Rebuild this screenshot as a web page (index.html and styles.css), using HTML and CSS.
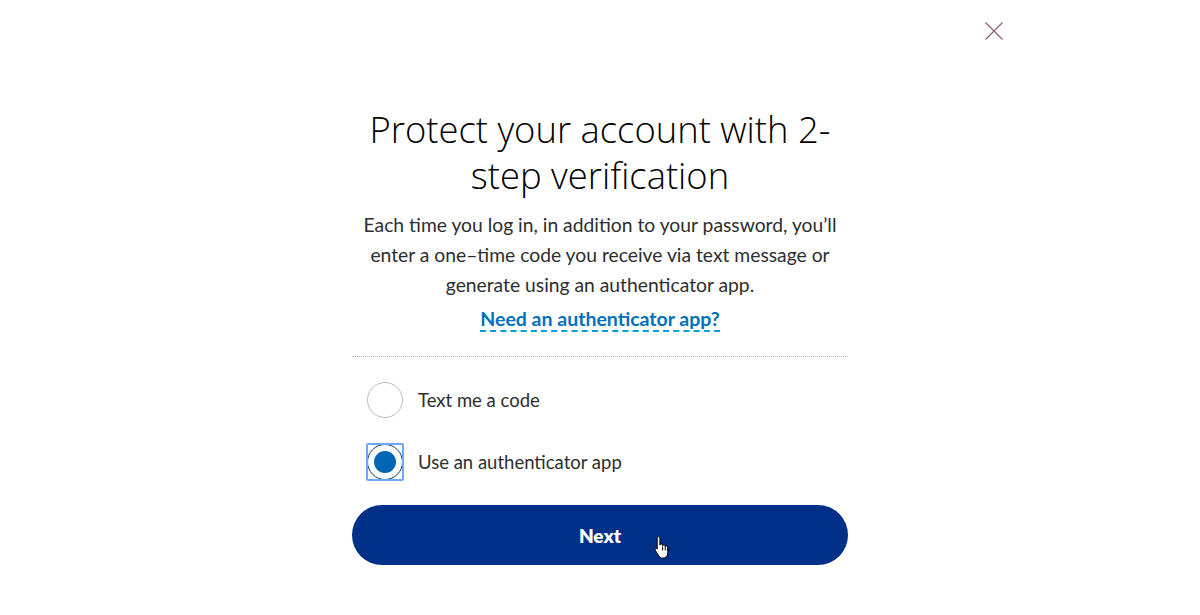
FILE: index.html
```html
<!DOCTYPE html>
<html>
  <head>
    <meta charset="utf-8">
    <title>2-step verification</title>
    <link rel="stylesheet" href="styles.css">
  </head>
  <body>
    <div class="topbar">
      <button class="close" aria-label="Close">
        <svg width="18" height="18" viewBox="0 0 18 18"><path d="M0.5 0.5L17.5 17.5M17.5 0.5L0.5 17.5" stroke="#8e5678" stroke-width="1.1" fill="none"/></svg>
      </button>
    </div>
    <div class="main">
      <h1 class="title">Protect your account with 2-step verification</h1>
      <p class="lead">Each time you log in, in addition to your password, you’ll enter a one–time code you receive via text message or generate using an authenticator app.</p>
      <div class="link-row"><a class="help-link" href="#">Need an authenticator app?</a></div>
      <div class="options">
        <label class="option">
          <span class="radio"></span>
          <span class="option-text">Text me a code</span>
        </label>
        <label class="option">
          <span class="radio checked"><span class="dot"></span></span>
          <span class="option-text">Use an authenticator app</span>
        </label>
      </div>
      <button class="next">Next
        <svg class="cursor" width="16" height="24" viewBox="0 0 16 24"><path d="M4.5 1.5c.8 0 1.4.6 1.4 1.4v7.2c.2-.8.8-1.2 1.4-1.2.8 0 1.3.6 1.3 1.3v.6c.2-.6.7-1 1.3-1 .8 0 1.3.6 1.3 1.3v.7c.2-.5.7-.9 1.3-.9.8 0 1.3.6 1.3 1.4v5.5c0 3.2-2 5.400-5.2 5.4H8.8c-1.9 0-3-.9-4-2.4L1.4 15.6c-.5-.7-.3-1.6.4-2 .6-.4 1.4-.2 1.9.4l-.6-.6.1.1V2.9c0-.8.5-1.4 1.3-1.4z" fill="#fff" stroke="#000" stroke-width="1"/><path d="M8.6 11.5v4M11.2 12v3.5M13.7 12.8v3" stroke="#000" stroke-width="1"/></svg>
      </button>
    </div>
  </body>
</html>
```

FILE: styles.css
```css
*, *::before, *::after {
  box-sizing: border-box;
  margin: 0;
  padding: 0;
}

body {
  background: #fff;
  color: #2c2e2f;
  font-family: "Lato", "Noto Sans", sans-serif;
}

.topbar {display: flex; justify-content: flex-end; padding: 22px 197px 0 0; height: 106px;}
.close {background: none; border: 0; width: 18px; height: 18px; cursor: pointer;}
.close svg {display: block;}

.main {width: 496px; margin: 0 auto; text-align: center;}

.title {
  font-family: "Open Sans", sans-serif;
  font-weight: 300;
  font-size: 36.4px;
  line-height: 46px;
  color: #000;
}

.lead {
  font-size: 19.3px;
  line-height: 30px;
  margin-top: 12px;
}

.link-row {margin-top: 6px; padding-bottom: 24px; border-bottom: 1px dotted #b5b5b5;}
.help-link {
  font-weight: 700;
  font-size: 19.5px;
  line-height: 26px;
  color: #0070ba;
  text-decoration: none;
  border-bottom: 2px dashed #009cde;
}

.options {padding: 24px 0 0 15px; text-align: left;}
.option {display: flex; align-items: center; gap: 15px; height: 37px; margin-bottom: 25px; font-size: 18.5px;}
.radio {
  width: 36px;
  height: 36px;
  border: 1px solid #b9bcbf;
  border-radius: 50%;
  flex-shrink: 0;
  display: flex;
  align-items: center;
  justify-content: center;
}
.radio.checked {
  border: 1.5px solid #0d3b6e;
  position: relative;
}
.radio.checked::before {
  content: "";
  position: absolute;
  inset: -2px;
  border: 2px solid #6fa8f2;
  border-radius: 2px;
}
.dot {width: 22px; height: 22px; border-radius: 50%; background: #0065b3;}

.next {
  display: block;
  position: relative;
  width: 496px;
  height: 60px;
  margin-top: 2px;
  border: 0;
  border-radius: 30px;
  background: #003087;
  color: #fff;
  font-family: "Lato", "Noto Sans", sans-serif;
  font-weight: 800;
  font-size: 19px;
  cursor: pointer;
}
.cursor {position: absolute; left: 302px; top: 30px;}
```
